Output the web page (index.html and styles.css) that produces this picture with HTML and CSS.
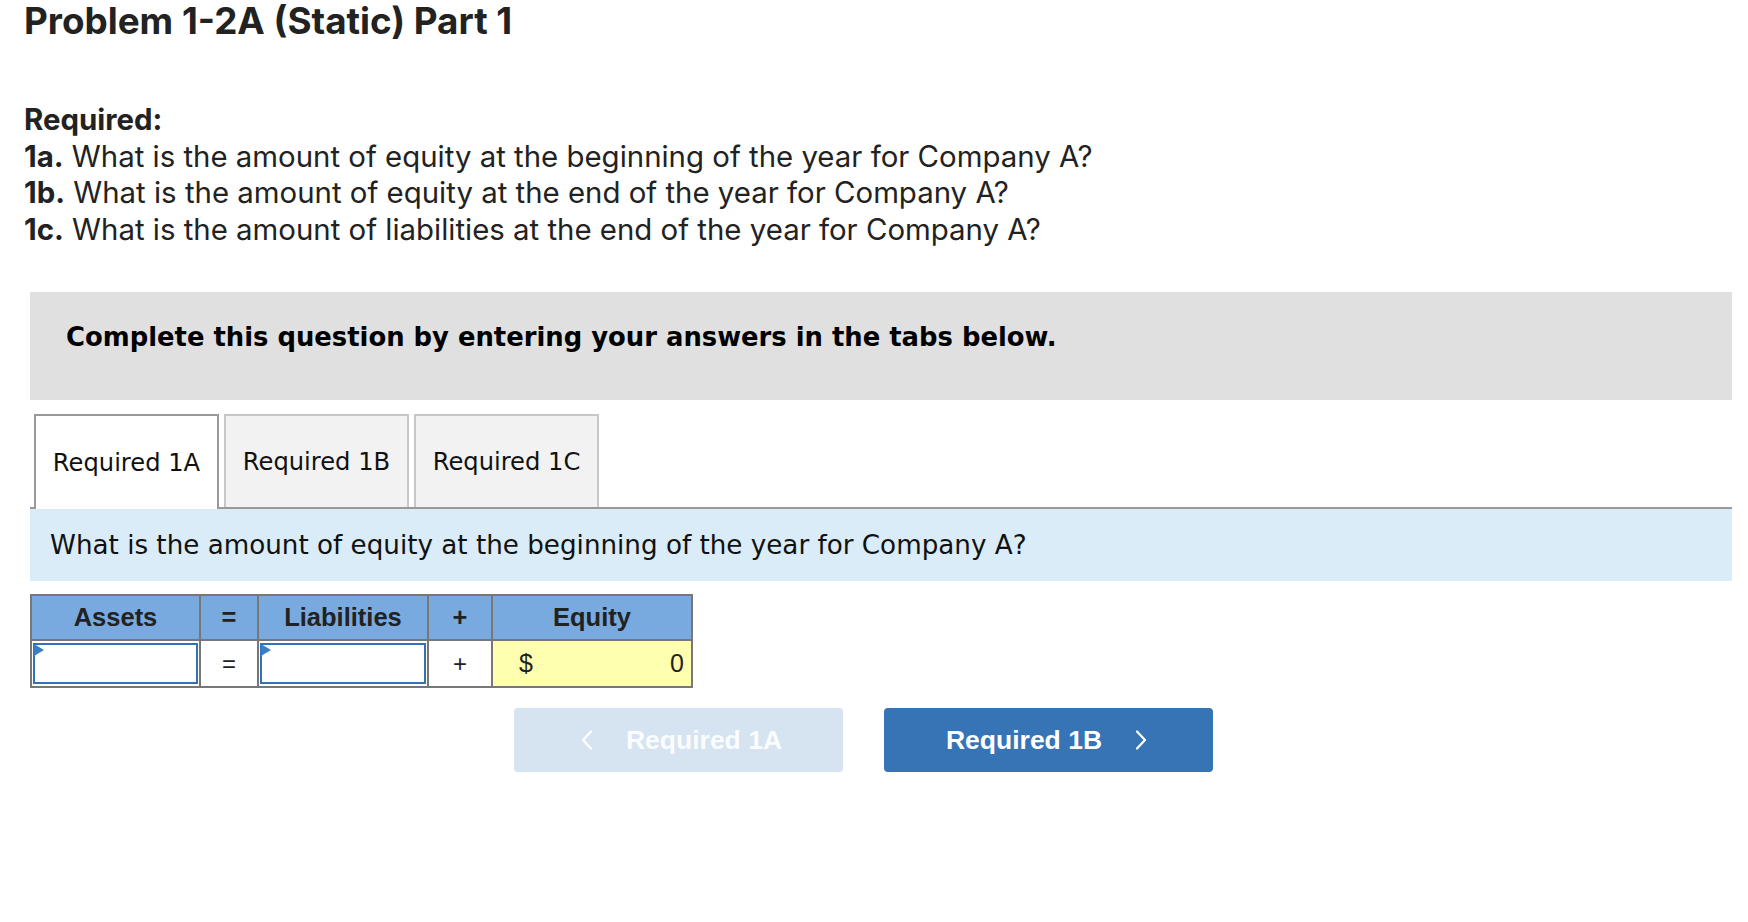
FILE: index.html
```html
<!DOCTYPE html>
<html lang="en">
<head>
<meta charset="utf-8">
<title>Problem 1-2A (Static) Part 1</title>
<link rel="stylesheet" href="styles.css">
</head>
<body>
<div class="page">
  <h1 class="title">Problem 1-2A (Static) Part 1</h1>
  <div class="required">
    <div class="req-head">Required:</div>
    <div><b>1a.</b> What is the amount of equity at the beginning of the year for Company A?</div>
    <div><b>1b.</b> What is the amount of equity at the end of the year for Company A?</div>
    <div><b>1c.</b> What is the amount of liabilities at the end of the year for Company A?</div>
  </div>
  <div class="panel">
    <div class="instructions">Complete this question by entering your answers in the tabs below.</div>
    <div class="tabs">
      <div class="tab active">Required 1A</div>
      <div class="tab">Required 1B</div>
      <div class="tab">Required 1C</div>
    </div>
    <div class="question">What is the amount of equity at the beginning of the year for Company A?</div>
    <table class="eq">
      <colgroup>
        <col class="c-assets"><col class="c-op"><col class="c-liab"><col class="c-op2"><col class="c-equity">
      </colgroup>
      <thead>
        <tr><th>Assets</th><th>=</th><th>Liabilities</th><th>+</th><th>Equity</th></tr>
      </thead>
      <tbody>
        <tr>
          <td class="in"><div class="input"></div></td>
          <td class="op">=</td>
          <td class="in"><div class="input"></div></td>
          <td class="op">+</td>
          <td class="equity"><div class="money"><span>$</span><span>0</span></div></td>
        </tr>
      </tbody>
    </table>
    <div class="nav">
      <button class="btn prev"><svg class="chev" viewBox="0 0 12 20" width="12" height="20"><polyline points="10,1.5 2,10 10,18.5" fill="none" stroke="#fff" stroke-width="2.2" stroke-linecap="round" stroke-linejoin="round"/></svg><span>Required 1A</span></button>
      <button class="btn next"><span>Required 1B</span><svg class="chev" viewBox="0 0 12 20" width="12" height="20"><polyline points="2,1.5 10,10 2,18.5" fill="none" stroke="#fff" stroke-width="2.2" stroke-linecap="round" stroke-linejoin="round"/></svg></button>
    </div>
  </div>
</div>
</body>
</html>
```
FILE: styles.css
```css
html, body {
  margin: 0;
  padding: 0;
  background: #ffffff;
}

.page {
  color: #222222;
}

.title {
  margin: 0;
  padding-left: 24px;
  font-family: "Inter", "Liberation Sans", sans-serif;
  font-weight: 700;
  font-size: 36.8px;
  line-height: 42px;
  color: #222222;
}

.required {
  margin-top: 60px;
  padding-left: 24px;
  font-family: "Inter", "Liberation Sans", sans-serif;
  font-size: 29.4px;
  line-height: 36.6px;
  color: #222222;
}

.req-head,
.required b {
  font-weight: 700;
}

.panel {
  margin: 44px 16px 0 30px;
}

.instructions {
  box-sizing: border-box;
  height: 108px;
  padding: 30px 0 0 36px;
  background: #e0e0e0;
  font-family: "DejaVu Sans", Verdana, sans-serif;
  font-weight: 700;
  font-size: 25.85px;
  line-height: 30px;
  color: #000000;
}

.tabs {
  margin-top: 14px;
  display: flex;
  align-items: flex-start;
  gap: 5px;
  padding-left: 4px;
  height: 93px;
  border-bottom: 2px solid #999999;
}

.tab {
  box-sizing: border-box;
  width: 185px;
  height: 93px;
  display: flex;
  align-items: center;
  justify-content: center;
  border: 2px solid #c8c8c8;
  border-bottom: 0;
  background: #f2f2f2;
  font-family: "DejaVu Sans", Verdana, sans-serif;
  font-size: 24.2px;
  color: #111111;
}

.tab.active {
  height: 95px;
  margin-bottom: -2px;
  background: #ffffff;
  border-color: #999999;
  position: relative;
}

.question {
  box-sizing: border-box;
  height: 72px;
  display: flex;
  align-items: center;
  padding-left: 20px;
  background: #d9ecf7;
  font-family: "DejaVu Sans", Verdana, sans-serif;
  font-size: 26.2px;
  color: #111111;
}

.eq {
  margin-top: 13px;
  border-collapse: collapse;
  table-layout: fixed;
  width: 661px;
  font-family: "Liberation Sans", Arial, sans-serif;
  color: #222222;
}

.c-assets { width: 169px; }
.c-op { width: 58px; }
.c-liab { width: 170px; }
.c-op2 { width: 64px; }
.c-equity { width: 200px; }

.eq th,
.eq td {
  border: 2px solid #777777;
  padding: 0;
  height: 43px;
  text-align: center;
}

.eq th {
  background: #78aae0;
  font-weight: 700;
  font-size: 25.5px;
}

.eq td {
  font-size: 24px;
}

.eq td.op {
  background: #ffffff;
}

.eq td.in {
  padding: 1px;
  background: #ffffff;
}

.input {
  position: relative;
  box-sizing: border-box;
  height: 41px;
  border: 2px solid #3372b7;
  background: #ffffff;
}

.input::before {
  content: "";
  position: absolute;
  left: -1px;
  top: -1px;
  width: 0;
  height: 0;
  border-left: 10px solid #3a7dc8;
  border-top: 6.5px solid transparent;
  border-bottom: 6.5px solid transparent;
}

.eq td.equity {
  background: #ffffb0;
}

.money {
  display: flex;
  justify-content: space-between;
  padding: 0 7px 0 26px;
  font-size: 25px;
}

.nav {
  margin-top: 20px;
  display: flex;
  gap: 41px;
  padding-left: 484px;
}

.btn {
  box-sizing: border-box;
  width: 329px;
  height: 64px;
  border: 0;
  border-radius: 4px;
  display: flex;
  align-items: center;
  justify-content: center;
  gap: 33px;
  padding: 0;
  font-family: "Liberation Sans", Arial, sans-serif;
  font-weight: 700;
  font-size: 26.5px;
  color: #ffffff;
  cursor: pointer;
}

.btn.prev {
  padding-left: 6px;
  background: #d6e3f1;
  color: rgba(255, 255, 255, 0.92);
}

.btn.next {
  padding-right: 4px;
  background: #3674b6;
}

.chev {
  display: block;
  flex: none;
}
```
